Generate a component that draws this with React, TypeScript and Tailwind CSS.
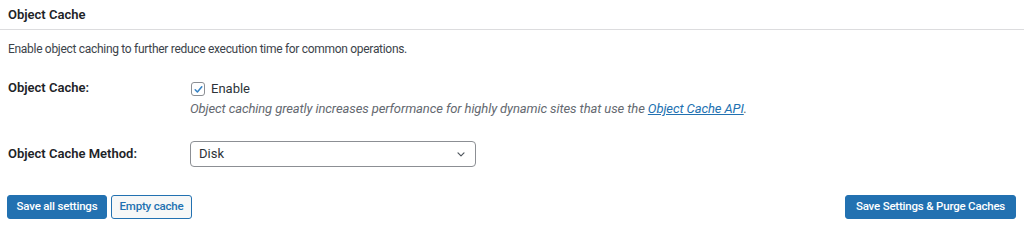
import React from "react";

export default function App() {
  const font = { fontFamily: "Roboto, 'Noto Sans', sans-serif" } as React.CSSProperties;
  return (
    <div className="w-[1024px] h-[244px] bg-white text-[#1d2327] text-[13px]" style={font}>
      <div className="h-[30px] border-b border-[#dcdcde] px-[8px] flex items-center">
        <h2 className="text-[13px] font-semibold leading-none">Object Cache</h2>
      </div>
      <p className="px-[8px] mt-[11px] leading-[16px] text-[12px] tracking-[-0.3px] text-[#3c434a]">
        Enable object caching to further reduce execution time for common operations.
      </p>
      <div className="px-[8px] mt-[21px] flex">
        <div className="w-[182px] font-semibold leading-[16px] pt-[2px]">Object Cache:</div>
        <div className="flex flex-col">
          <label className="flex items-center gap-[6px] h-[20px] pl-[1px] pt-[2px]">
            <span className="w-[14px] h-[14px] rounded-[3px] border border-[#8c8f94] bg-white flex items-center justify-center">
              <svg width="11" height="11" viewBox="0 0 20 20">
                <path d="M4 10.5 L8 14.5 L16 5" fill="none" stroke="#3582c4" strokeWidth="2.8" strokeLinecap="round" strokeLinejoin="round" />
              </svg>
            </span>
            <span className="text-[#2c3338]">Enable</span>
          </label>
          <p className="mt-[3px] italic text-[#646970] leading-[16px] tracking-[-0.1px]">
            Object caching greatly increases performance for highly dynamic sites that use the{" "}
            <a className="text-[#2271b1] underline">Object Cache API</a>.
          </p>
        </div>
      </div>
      <div className="px-[8px] mt-[24px] flex items-center">
        <div className="w-[182px] font-semibold leading-[16px]">Object Cache Method:</div>
        <div className="w-[286px] h-[26px] rounded-[4px] border border-[#8c8f94] flex items-center justify-between pl-[8px] pr-[8px] text-[#2c3338]">
          <span>Disk</span>
          <svg width="12" height="12" viewBox="0 0 20 20">
            <path d="M5 8 L10 13 L15 8" fill="none" stroke="#50575e" strokeWidth="2" strokeLinecap="round" strokeLinejoin="round" />
          </svg>
        </div>
      </div>
      <div className="px-[7px] mt-[28px] flex items-center justify-between">
        <div className="flex gap-[4px]">
          <button className="h-[24px] w-[100px] rounded-[3px] bg-[#2271b1] border border-[#2271b1] text-white text-[11.5px] tracking-[-0.2px] font-medium">
            Save all settings
          </button>
          <button className="h-[24px] w-[81px] rounded-[3px] bg-[#f6f7f7] border border-[#2271b1] text-[#2271b1] text-[11.5px] tracking-[-0.2px] font-medium">
            Empty cache
          </button>
        </div>
        <button className="h-[24px] w-[171px] mr-[1px] rounded-[3px] bg-[#2271b1] border border-[#2271b1] text-white text-[11.5px] tracking-[-0.2px] font-medium">
          Save Settings &amp; Purge Caches
        </button>
      </div>
    </div>
  );
}
